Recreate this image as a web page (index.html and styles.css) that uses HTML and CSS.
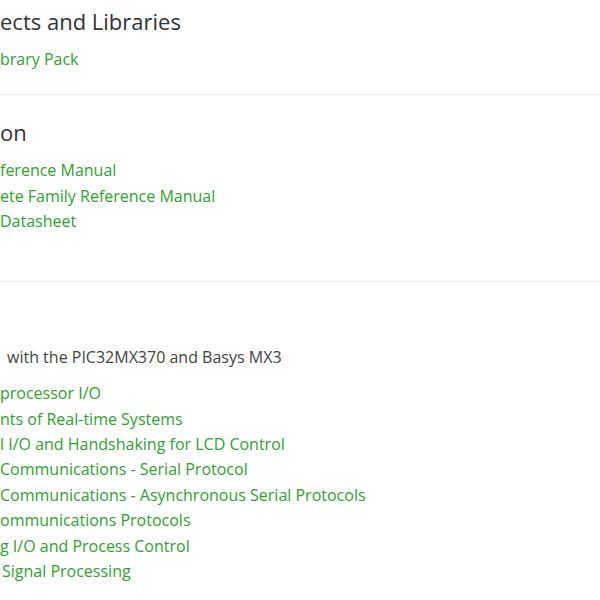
FILE: index.html
```html
<!DOCTYPE html>
<html lang="en">
<head>
  <meta charset="UTF-8" />
  <meta name="viewport" content="width=device-width, initial-scale=1.0"/>
  <title>Basys MX3 Resource Center</title>
  <link rel="stylesheet" href="styles.css">
</head>
<body>
  <div class="page">
    <section class="block">
      <h2>ects and Libraries</h2>
      <ul class="links">
        <li><a href="#">brary Pack</a></li>
      </ul>
    </section>

    <section class="block">
      <h2>on</h2>
      <ul class="links spaced">
        <li><a href="#">ference Manual</a></li>
        <li><a href="#">ete Family Reference Manual</a></li>
        <li><a href="#">Datasheet</a></li>
      </ul>
    </section>

    <section class="block untitled">
      <p class="intro">with the PIC32MX370 and Basys MX3</p>
      <ul class="links">
        <li><a href="#">processor I/O</a></li>
        <li><a href="#">nts of Real-time Systems</a></li>
        <li><a href="#">l I/O and Handshaking for LCD Control</a></li>
        <li><a href="#">Communications - Serial Protocol</a></li>
        <li><a href="#">Communications - Asynchronous Serial Protocols</a></li>
        <li><a href="#">ommunications Protocols</a></li>
        <li><a href="#">g I/O and Process Control</a></li>
        <li class="indent"><a href="#">Signal Processing</a></li>
      </ul>
    </section>
  </div>
</body>
</html>
```
FILE: styles.css
```css
:root {
  --text-color: #333333;
  --muted-color: #444444;
  --link-color: #2ea32e;
  --rule-color: #eeeeee;
}

html, body {
  overflow: hidden;
}

body {
  margin: 0;
  font-family: "Open Sans", Arial, sans-serif;
  font-size: 16px;
  color: var(--text-color);
  background: #ffffff;
}

/* page is scrolled down a little */
.page {
  margin-top: -16px;
}

.block {
  padding: 23px 0 22px;
  border-bottom: 1px solid var(--rule-color);
}

h2 {
  margin: 0 0 12px;
  font-size: 22px;
  font-weight: normal;
  line-height: 28px;
  white-space: nowrap;
}

.intro {
  margin: 0 0 11px;
  padding-left: 7px;
  line-height: 25.6px;
  color: var(--muted-color);
  white-space: nowrap;
}

/* heading of this block sits off screen, keep its room */
.untitled .intro {
  margin-top: 40px;
}

.links {
  list-style: none;
  margin: 0;
  padding: 0;
}

.links.spaced {
  margin-bottom: 24px;
}

.links li {
  line-height: 25.4px;
  white-space: nowrap;
}

.links li.indent {
  padding-left: 2px;
}

.links a {
  color: var(--link-color);
  text-decoration: none;
}
```
